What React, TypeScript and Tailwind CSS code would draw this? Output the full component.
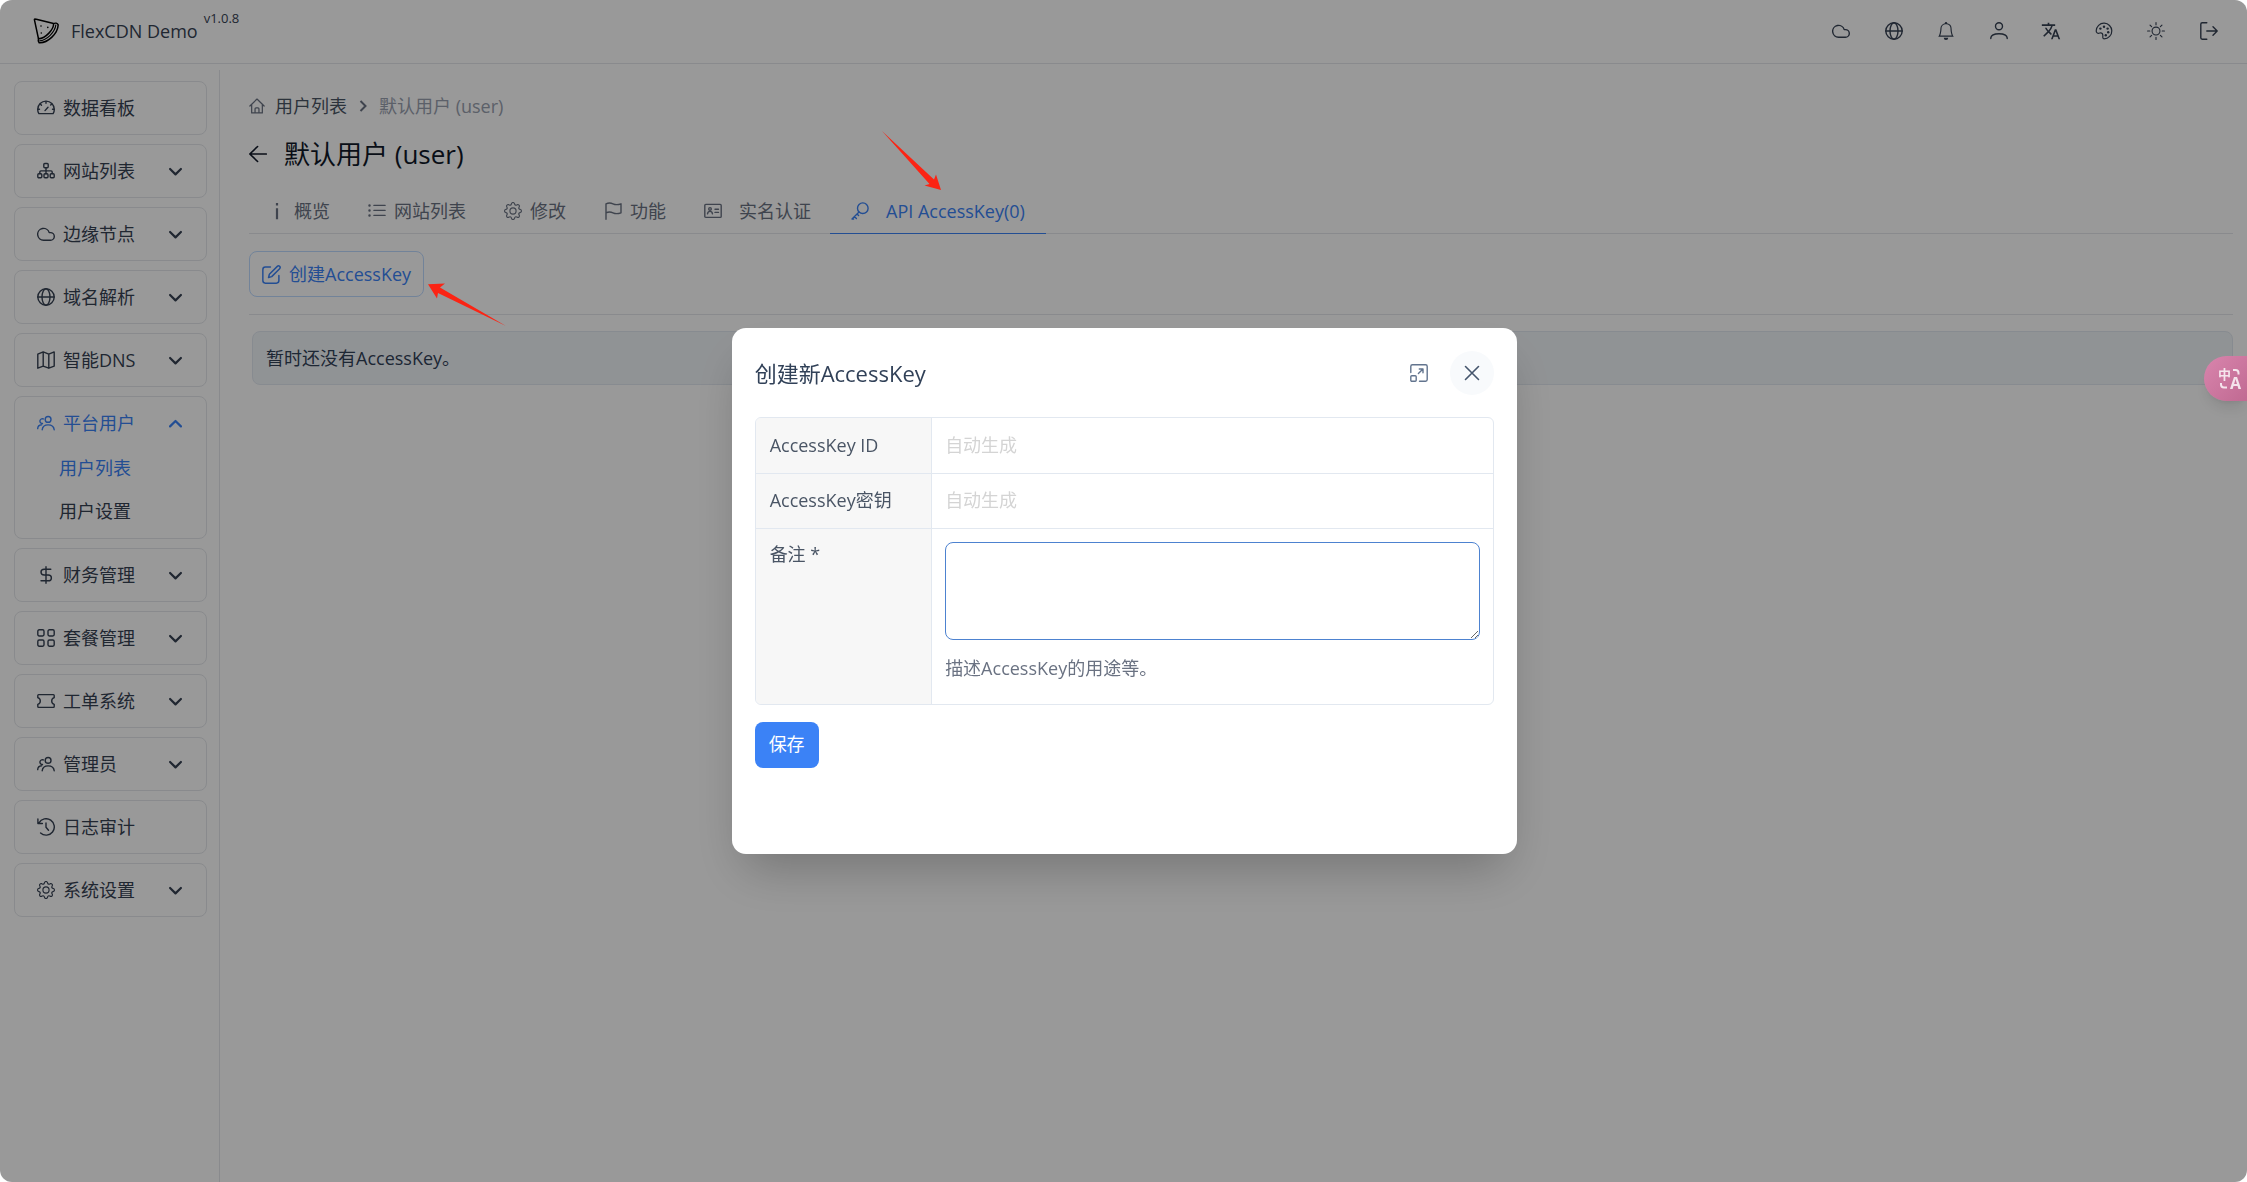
import { useState, type ReactNode } from "react";
import { BsBell, BsGear, BsListUl, BsSun } from "react-icons/bs";
import { MdTranslate } from "react-icons/md";

function Glyph({ children, className = "size-[18px]" }: { children: ReactNode; className?: string }) {
  return (
    <svg
      viewBox="0 0 18 18"
      fill="none"
      stroke="currentColor"
      strokeWidth={1.4}
      strokeLinecap="round"
      strokeLinejoin="round"
      className={`shrink-0 ${className}`}
      aria-hidden
    >
      {children}
    </svg>
  );
}

const GaugeIcon = () => (
  <Glyph>
    <path d="M1.9 14.6h14.2c.8-1.3 1.2-2.8 1.2-4.2a8.3 8.3 0 0 0-16.6 0c0 1.400.4 2.900 1.200 4.200z" />
    <path d="M9 2.4v1.8M3.3 5l1.2 1.2M14.7 5l-1 1M.9 10.2h1.6M15.5 10.2h1.6M8 11.6l3-3.4" />
  </Glyph>
);

const SitemapIcon = () => (
  <Glyph>
    <rect x="6.8" y="1.5" width="4.4" height="4.2" rx="1" />
    <rect x=".8" y="11.8" width="4" height="4" rx="1" />
    <rect x="7" y="11.8" width="4" height="4" rx="1" />
    <rect x="13.2" y="11.8" width="4" height="4" rx="1" />
    <path d="M9 5.7v6M2.8 11.6V10c0-.7.4-1.1 1.1-1.1h10.2c.7 0 1.1.4 1.1 1.1v1.6" />
  </Glyph>
);

const CloudIcon = () => (
  <Glyph>
    <path d="M13.5 15.2H6.6A5.9 5.9 0 1 1 12.2 7.6h1.3a3.8 3.8 0 0 1 0 7.6z" />
  </Glyph>
);

const GlobeIcon = () => (
  <Glyph>
    <circle cx="9" cy="9" r="8.2" />
    <ellipse cx="9" cy="9" rx="4" ry="8.2" />
    <path d="M.8 9h16.4" />
  </Glyph>
);

const MapIcon = () => (
  <Glyph>
    <path d="M.8 3.2 6.2.9v14.2L.8 17.2zM6.2.9l5.6 2.3v14l-5.6-2.1M11.8 3.2l5.4-2.3v14.2l-5.4 2.1" />
  </Glyph>
);

const UsersIcon = () => (
  <Glyph>
    <circle cx="11.1" cy="5.4" r="2.9" />
    <path d="M5.2 15.8c.3-3 2.4-4.9 5.9-4.9s5.8 1.9 6.1 4.9" />
    <path d="M6.3 4.9a2.4 2.4 0 1 0-.8 4.6M.7 14.6c.1-2.2 1.5-3.6 3.9-3.8" />
  </Glyph>
);

const DollarIcon = () => (
  <Glyph>
    <path d="M9 .8v16.4M13.8 3.2H7.2C5.2 3.2 4 4.3 4 6s1.2 3 3.2 3h4c2 0 3.2 1.2 3.2 2.9s-1.2 2.9-3.2 2.9H4" />
  </Glyph>
);

const GridIcon = () => (
  <Glyph>
    <rect x=".8" y=".8" width="6.2" height="6.2" rx="1.4" />
    <rect x="11" y=".8" width="6.2" height="6.2" rx="1.4" />
    <rect x=".8" y="11" width="6.2" height="6.2" rx="1.4" />
    <rect x="11" y="11" width="6.2" height="6.2" rx="1.4" />
  </Glyph>
);

const TicketIcon = () => (
  <Glyph>
    <path d="M1.6 2.6h14.8c.5 0 .8.3.8.8v2.3c-1.7.5-2.5 1.7-2.5 3.3s.8 2.8 2.5 3.3v2.3c0 .5-.3.8-.8.8H1.6c-.5 0-.8-.3-.8-.8v-2.3C2.5 11.8 3.3 10.6 3.3 9S2.5 6.2.8 5.7V3.4c0-.5.3-.8.8-.8z" />
  </Glyph>
);

const HistoryIcon = () => (
  <Glyph>
    <path d="M2 4.8A8.2 8.2 0 1 1 3.6 15M.9 1v4.5h4.5M9 5v4.2l2.5 3" />
  </Glyph>
);

const UserIcon = () => (
  <Glyph>
    <circle cx="9" cy="4.3" r="3.5" />
    <path d="M.8 16.5v-.6c.3-2.600 3-4.200 8.200-4.200s7.900 1.600 8.200 4.200v.6" />
  </Glyph>
);

const PaletteIcon = () => (
  <svg viewBox="1 1 30 30" fill="currentColor" className="size-[18px] shrink-0" aria-hidden>
    <circle cx="10" cy="12" r="2" />
    <circle cx="16" cy="9" r="2" />
    <circle cx="22" cy="12" r="2" />
    <circle cx="23" cy="18" r="2" />
    <circle cx="19" cy="23" r="2" />
    <path d="M16.54 2A14 14 0 0 0 2 16a4.82 4.82 0 0 0 6.09 4.65l1.12-.31A3 3 0 0 1 13 23.24V27a3 3 0 0 0 3 3A14 14 0 0 0 30 15.46 14.05 14.05 0 0 0 16.54 2zm8.11 22.31A11.93 11.93 0 0 1 16 28a1 1 0 0 1-1-1v-3.76a5 5 0 0 0-5-5 5.07 5.07 0 0 0-1.33.18l-1.12.31A2.82 2.82 0 0 1 4 16 12 12 0 0 1 16.47 4 12.18 12.18 0 0 1 28 15.53a11.89 11.89 0 0 1-3.35 8.78z" />
  </svg>
);

const SignOutIcon = () => (
  <Glyph>
    <path d="M6.8.8H2.2C1.3.8.8 1.3.8 2.2v13.6c0 .9.5 1.4 1.4 1.4h4.6M6.8 9h10.4M13 4.8 17.2 9 13 13.2" />
  </Glyph>
);

const InfoIcon = () => (
  <Glyph>
    <path d="M9 6.2v11M9 1v2.4" strokeWidth="2.2" strokeLinecap="butt" />
  </Glyph>
);

const FlagIcon = () => (
  <Glyph>
    <path d="M2 17.2V1.8c2.4-1.2 4.6-1.2 7 0s4.8 1.2 8 0v9c-3.2 1.2-5.6 1.2-8 0s-4.6-1.2-7 0" />
  </Glyph>
);

const IdCardIcon = () => (
  <Glyph>
    <rect x=".8" y="2.4" width="16.4" height="13" rx="1" />
    <circle cx="6" cy="6.9" r="1.3" />
    <path d="M3.5 11.9c.2-1.7 1-2.5 2.5-2.5s2.3.8 2.5 2.5M11 7.2h3.5M11 10.4h3.5" />
  </Glyph>
);

const KeyIcon = () => (
  <Glyph>
    <circle cx="11.8" cy="6.2" r="5.3" />
    <path d="M8 10 1 17M3.4 14.6l2 2M6 12l1.6 1.6M1 17h1.6" />
  </Glyph>
);

const EditIcon = () => (
  <Glyph className="size-[19px]">
    <path d="M8 2H3.2C1.7 2 .8 2.9.8 4.4v10.4c0 1.5.9 2.4 2.4 2.4h10.4c1.5 0 2.4-.9 2.4-2.4V10" />
    <path d="M14.5 1.3a1.5 1.5 0 0 1 2.2 2.2L9.2 11l-3 .8.8-3z" />
  </Glyph>
);

const HomeIcon = () => (
  <Glyph className="size-4">
    <path d="M1 9 9 1.2 17 9M3 7.4v9.4h12V7.4M6.8 16.8v-4.6c0-.7.4-1.1 1.1-1.1h2.2c.7 0 1.1.4 1.1 1.1v4.6" />
  </Glyph>
);

const ArrowLeftIcon = () => (
  <Glyph>
    <path d="M17.3 9H.8M8.6 1.5.8 9l7.8 7.5" strokeWidth="1.6" />
  </Glyph>
);

const ExpandIcon = () => (
  <Glyph>
    <path d="M.8 8.5V2.4C.8 1.4 1.4.8 2.4.8h13.2c1 0 1.6.6 1.6 1.6v13.2c0 1-.6 1.6-1.6 1.6H9.5" />
    <rect x=".8" y="11.8" width="5.4" height="5.4" rx="1" />
    <path d="M8.4 9.6 13 5M9.3 5H13v3.7" />
  </Glyph>
);

const CloseIcon = () => (
  <Glyph>
    <path d="m2.5 2.5 13 13m0-13-13 13" strokeWidth="1.6" />
  </Glyph>
);

function Chevron({ up }: { up?: boolean }) {
  return (
    <Glyph className="size-[13px]">
      <path d={up ? "m1.5 13 7.5-7.5 7.5 7.5" : "m1.5 5.5 7.5 7.5 7.5-7.5"} strokeWidth="3" />
    </Glyph>
  );
}

function Logo() {
  return (
    <svg viewBox="0 0 26 26" fill="none" stroke="black" strokeWidth="1.5" strokeLinejoin="round" className="size-[26px]" aria-hidden>
      <path d="M5.5 20.8 1.4 1.6c0-.5.4-.8.9-.6L20.6 5.6" />
      <path d="M20.6 5.6c.2 5.7-7.6 14.6-15.1 15.2-.6 1.8-.1 3.2.6 3.9C14.5 25.3 24.8 16 25.2 6.8c-.8-1.500-3-2-4.600-1.200z" />
      <path d="M6.3 22.9C14 22.3 22 14 22.9 6.6" strokeWidth="1.1" />
      <g fill="black" stroke="none">
        <circle cx="8" cy="8" r=".8" />
        <circle cx="14.8" cy="9.4" r=".8" />
        <circle cx="8.3" cy="15" r=".8" />
      </g>
    </svg>
  );
}

const menu = [
  { label: "数据看板", icon: <GaugeIcon /> },
  { label: "网站列表", icon: <SitemapIcon />, expandable: true },
  { label: "边缘节点", icon: <CloudIcon />, expandable: true },
  { label: "域名解析", icon: <GlobeIcon />, expandable: true },
  { label: "智能DNS", icon: <MapIcon />, expandable: true },
  { label: "平台用户", icon: <UsersIcon />, expandable: true, children: ["用户列表", "用户设置"] },
  { label: "财务管理", icon: <DollarIcon />, expandable: true },
  { label: "套餐管理", icon: <GridIcon />, expandable: true },
  { label: "工单系统", icon: <TicketIcon />, expandable: true },
  { label: "管理员", icon: <UsersIcon />, expandable: true },
  { label: "日志审计", icon: <HistoryIcon /> },
  { label: "系统设置", icon: <BsGear className="size-[18px] shrink-0" />, expandable: true }
];

const headerActions = [
  { label: "集群", icon: <CloudIcon /> },
  { label: "站点", icon: <GlobeIcon /> },
  { label: "通知", icon: <BsBell size={18} /> },
  { label: "账号", icon: <UserIcon /> },
  { label: "语言", icon: <MdTranslate size={20} className="-mx-px" /> },
  { label: "主题", icon: <PaletteIcon /> },
  { label: "亮度", icon: <BsSun size={18} /> },
  { label: "退出", icon: <SignOutIcon /> }
];

const tabs = [
  { label: "概览", icon: <InfoIcon /> },
  { label: "网站列表", icon: <BsListUl size={20} className="-mx-px" /> },
  { label: "修改", icon: <BsGear size={18} /> },
  { label: "功能", icon: <FlagIcon /> },
  { label: "实名认证", icon: <IdCardIcon />, wide: true },
  { label: "API AccessKey(0)", icon: <KeyIcon />, wide: true, active: true }
];

function Header() {
  return (
    <header className="flex h-16 items-center justify-between border-b border-gray-200 pr-[29px] pb-0.5 pl-[33px]">
      <div className="flex h-full items-center">
        <Logo />
        <a href="#" className="ml-3 leading-6">
          FlexCDN Demo
        </a>
        <span className="ml-1.5 self-start pt-2.5 text-[13px] leading-4">v1.0.8</span>
      </div>
      <nav className="flex w-[386px] justify-between">
        {headerActions.map((action) => (
          <button key={action.label} type="button" aria-label={action.label}>
            {action.icon}
          </button>
        ))}
      </nav>
    </header>
  );
}

function Sidebar() {
  return (
    <aside className="mt-1.5 w-[220px] shrink-0 border-r border-gray-200 pt-[11px] pr-3 pl-3.5">
      <ul className="space-y-[9px]">
        {menu.map((item) => (
          <li key={item.label} className="rounded-lg border border-gray-200">
            <button
              type="button"
              className={`flex h-[52px] w-full items-center gap-2 pr-6 pl-[22px] ${item.children ? "text-[#3b82f6]" : ""}`}
            >
              {item.icon}
              <span className="flex-1 text-left leading-6">{item.label}</span>
              {item.expandable && <Chevron up={Boolean(item.children)} />}
            </button>
            {item.children && (
              <ul className="space-y-[19px] pt-[7px] pb-[15px] pl-11 leading-6">
                {item.children.map((child, index) => (
                  <li key={child}>
                    <a href="#" className={index === 0 ? "text-[#3b82f6]" : ""}>
                      {child}
                    </a>
                  </li>
                ))}
              </ul>
            )}
          </li>
        ))}
      </ul>
    </aside>
  );
}

function UserPage() {
  return (
    <main className="min-w-0 flex-1 pt-[30px] pr-3.5 pl-[29px]">
      <nav className="flex items-center leading-6 text-gray-500">
        <HomeIcon />
        <a href="#" className="ml-2.5 text-gray-600">
          用户列表
        </a>
        <svg viewBox="0 0 8 12" fill="none" stroke="currentColor" strokeWidth="2" className="mx-3 h-3 w-2" aria-hidden>
          <path d="m1.5 1 5 5-5 5" />
        </svg>
        <span className="text-gray-400">默认用户 (user)</span>
      </nav>

      <h1 className="mt-[18px] flex items-center gap-[17px] text-[26px] leading-9 text-gray-900">
        <button type="button" aria-label="返回">
          <ArrowLeftIcon />
        </button>
        默认用户 (user)
      </h1>

      <div className="mt-4 flex border-b border-gray-200 text-gray-500">
        {tabs.map((tab) => (
          <a
            key={tab.label}
            href="#"
            className={`-mb-px flex h-[46px] items-center leading-6 ${tab.wide ? "gap-[17px]" : "gap-2"} ${
              tab.active ? "border-b border-[#3b82f6] px-[21px] text-[#3b82f6]" : "px-[19px]"
            }`}
          >
            {tab.icon}
            {tab.label}
          </a>
        ))}
      </div>

      <div className="border-b border-gray-200 py-[17px]">
        <button
          type="button"
          className="flex h-[46px] items-center gap-2 rounded-lg border border-blue-200 px-3 text-[#3b82f6]"
        >
          <EditIcon />
          创建AccessKey
        </button>
      </div>

      <div className="mt-4 ml-[3px] rounded-lg border border-slate-200 bg-slate-100 px-[13px] py-3.5 leading-6 text-slate-700">
        暂时还没有AccessKey。
      </div>
    </main>
  );
}

function CreateKeyDialog() {
  const [note, setNote] = useState("");

  return (
    <section
      role="dialog"
      aria-labelledby="dialog-title"
      className="w-[35%] rounded-[14px] bg-white px-[23px] pt-[23px] pb-[86px] text-gray-600 shadow-2xl"
    >
      <div className="flex items-center">
        <h2 id="dialog-title" className="flex-1 text-[22px] leading-8 text-slate-700">
          创建新AccessKey
        </h2>
        <button type="button" aria-label="放大" className="mr-[22px] text-slate-500">
          <ExpandIcon />
        </button>
        <button
          type="button"
          aria-label="关闭"
          className="flex size-11 items-center justify-center rounded-full bg-slate-50 text-slate-600"
        >
          <CloseIcon />
        </button>
      </div>

      <form onSubmit={(event) => event.preventDefault()}>
        <div className="mt-[22px] overflow-hidden rounded-md border border-slate-200">
          <table className="w-full text-left align-top">
            <tbody>
              <tr className="h-[55px] border-b border-slate-200">
                <th className="w-44 border-r border-slate-200 bg-neutral-100/80 px-3.5 font-normal">AccessKey ID</th>
                <td className="px-[13px] text-neutral-300">自动生成</td>
              </tr>
              <tr className="h-[55px] border-b border-slate-200">
                <th className="border-r border-slate-200 bg-neutral-100/80 px-3.5 font-normal">AccessKey密钥</th>
                <td className="px-[13px] text-neutral-300">自动生成</td>
              </tr>
              <tr>
                <th className="border-r border-slate-200 bg-neutral-100/80 px-3.5 pt-3 align-top font-normal">
                  <label htmlFor="note">备注 *</label>
                </th>
                <td className="px-[13px] pt-[13px] pb-6">
                  <textarea
                    id="note"
                    value={note}
                    onChange={(event) => setNote(event.target.value)}
                    className="block h-[98px] w-full resize rounded-lg border border-[#4d82d0] p-2 outline-none"
                  />
                  <p className="mt-4 leading-6 text-gray-500">描述AccessKey的用途等。</p>
                </td>
              </tr>
            </tbody>
          </table>
        </div>
        <button type="submit" className="mt-[17px] h-[46px] rounded-lg bg-[#3b82f6] px-3.5 text-white">
          保存
        </button>
      </form>
    </section>
  );
}

function TranslateTab() {
  return (
    <button
      type="button"
      aria-label="翻译"
      className="fixed top-[356px] right-0 flex h-[45px] w-[43px] items-center rounded-l-full bg-linear-to-br from-[#d985ad] to-[#c06a92] pl-[13px] text-white/80 shadow-lg"
    >
      <svg viewBox="0 0 27 26" className="h-[26px] w-[27px] overflow-visible" aria-hidden>
        <text x="1" y="13" fontSize="13" fontWeight="700" fill="currentColor">
          中
        </text>
        <text x="13" y="23" fontSize="16" fontWeight="700" fill="currentColor">
          A
        </text>
        <path d="M16 4h2.5c2 0 3 1 3 3v1.5M4 17v1.500c0 2 1 3 3 3h3" fill="none" stroke="currentColor" strokeWidth="2" />
      </svg>
    </button>
  );
}

// Red pointers for the two places to click.
function Pointers() {
  return (
    <>
      <svg viewBox="0 0 60 60" className="pointer-events-none absolute top-[131px] left-[882px] size-[60px] fill-[#fb2414]" aria-hidden>
        <path d="M0 0 52 48.5 54 43.5 59 59 42.5 54.5 47.5 53z" />
      </svg>
      <svg viewBox="0 0 78 43" className="pointer-events-none absolute top-[283px] left-[428px] h-[43px] w-[78px] fill-[#fb2414]" aria-hidden>
        <path d="M78 43 12 4.5 17 .5 0 1.3 9 15.5 10 10z" />
      </svg>
    </>
  );
}

export default function App() {
  return (
    <div className="flex min-h-screen flex-col bg-white font-['Open_Sans','Noto_Sans_CJK_SC',sans-serif] text-[18px] text-gray-700">
      <Header />
      <div className="flex flex-1">
        <Sidebar />
        <UserPage />
      </div>
      <div className="fixed inset-0 flex items-center justify-center rounded-xl bg-black/40 pl-0.5">
        <CreateKeyDialog />
      </div>
      <TranslateTab />
      <Pointers />
    </div>
  );
}
